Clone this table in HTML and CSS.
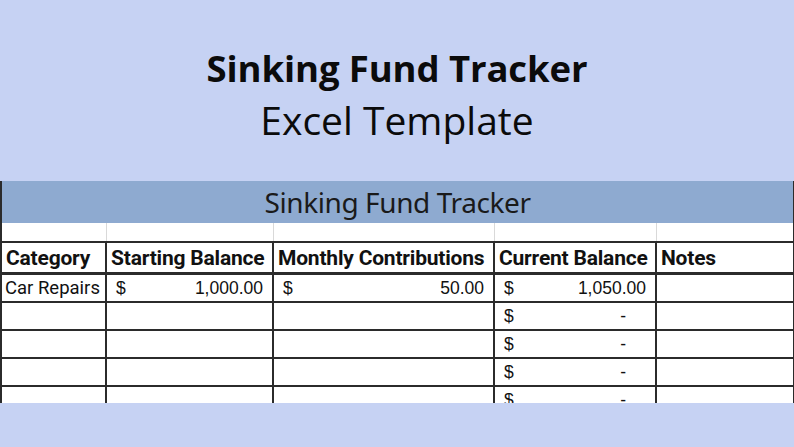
FILE: index.html
```html
<!DOCTYPE html>
<html>
<head>
<meta charset="utf-8">
<link rel="stylesheet" href="styles.css">
</head>
<body>
<header class="hero">
  <h1 class="hero-title">Sinking Fund Tracker</h1>
  <p class="hero-sub">Excel Template</p>
</header>
<section class="sheet">
  <table class="grid">
    <colgroup>
      <col class="c1"><col class="c2"><col class="c3"><col class="c4"><col class="c5">
    </colgroup>
    <tr class="band"><td colspan="5">Sinking Fund Tracker</td></tr>
    <tr class="blank"><td></td><td></td><td></td><td></td><td></td></tr>
    <tr class="head">
      <th>Category</th><th>Starting Balance</th><th>Monthly Contributions</th><th>Current Balance</th><th>Notes</th>
    </tr>
    <tr class="row">
      <td class="txt">Car Repairs</td>
      <td><div class="acct"><span>$</span><span>1,000.00</span></div></td>
      <td><div class="acct"><span>$</span><span>50.00</span></div></td>
      <td><div class="acct"><span>$</span><span>1,050.00</span></div></td>
      <td></td>
    </tr>
    <tr class="row">
      <td></td><td></td><td></td>
      <td><div class="acct"><span>$</span><span class="dash">-</span></div></td>
      <td></td>
    </tr>
    <tr class="row">
      <td></td><td></td><td></td>
      <td><div class="acct"><span>$</span><span class="dash">-</span></div></td>
      <td></td>
    </tr>
    <tr class="row">
      <td></td><td></td><td></td>
      <td><div class="acct"><span>$</span><span class="dash">-</span></div></td>
      <td></td>
    </tr>
    <tr class="row">
      <td></td><td></td><td></td>
      <td><div class="acct"><span>$</span><span class="dash">-</span></div></td>
      <td></td>
    </tr>
  </table>
</section>
</body>
</html>
```

FILE: styles.css
```css
html, body {
  margin: 0;
  padding: 0;
  background: #c6d2f3;
  width: 794px;
  height: 447px;
  overflow: hidden;
}
.hero {
  height: 181px;
  display: flex;
  flex-direction: column;
  align-items: center;
  font-family: "Open Sans", sans-serif;
  color: #0b0b0b;
}
.hero-title {
  margin: 45px 0 0;
  font-size: 36.5px;
  font-weight: 700;
  line-height: 46px;
  letter-spacing: -0.1px;
}
.hero-sub {
  margin: 6px 0 0;
  font-size: 39px;
  font-weight: 400;
  line-height: 46px;
}
.sheet {
  height: 222px;
  width: 794px;
  overflow: hidden;
  background: #fff;
}
.grid {
  border-collapse: collapse;
  table-layout: fixed;
  width: 793px;
  font-family: "Liberation Sans", Arial, sans-serif;
  color: #111;
}
.c1 { width: 105px; }
.c2 { width: 167px; }
.c3 { width: 221px; }
.c4 { width: 162px; }
.c5 { width: 138px; }
.grid td, .grid th {
  padding: 0;
  overflow: hidden;
  white-space: nowrap;
}
.band td {
  height: 42px;
  background: #8eaad0;
  text-align: center;
  font-family: "Noto Sans", sans-serif;
  font-size: 28px;
  letter-spacing: -0.4px;
  color: #1a1a1a;
  border-left: 2px solid #2b2b2b;
  border-right: 2px solid #2b2b2b;
}
.blank td {
  height: 18px;
  border-left: 1px solid #d9d9d9;
  border-right: 1px solid #d9d9d9;
}
.blank td:first-child { border-left: 2px solid #2b2b2b; }
.blank td:last-child { border-right: 2px solid #2b2b2b; }
.head th {
  height: 29px;
  border: 2px solid #2b2b2b;
  border-bottom-width: 3px;
  text-align: left;
  padding-left: 4px;
  font-family: "Roboto", sans-serif;
  font-weight: 700;
  font-size: 21px;
  letter-spacing: -0.2px;
}
.row td {
  height: 26px;
  border: 2px solid #2b2b2b;
  font-size: 17.5px;
}
.row td.txt {
  padding-left: 3px;
  font-family: "Roboto", sans-serif;
  font-size: 18.5px;
}
.acct {
  display: flex;
  justify-content: space-between;
  padding: 0 9px 0 9px;
}
.acct .dash { padding-right: 20px; }
```
